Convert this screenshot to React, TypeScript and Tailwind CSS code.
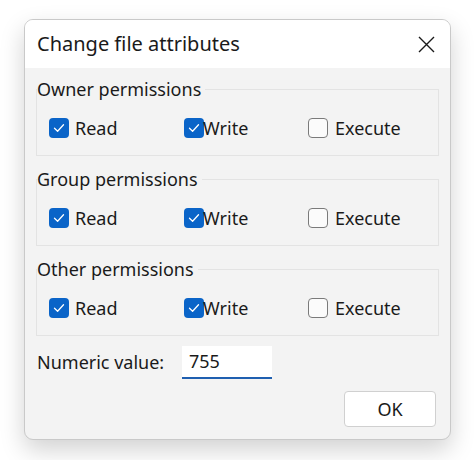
import React from "react";

function Check({ checked }: { checked: boolean }) {
  if (checked) {
    return (
      <span className="flex h-[20px] w-[20px] shrink-0 items-center justify-center rounded-[4px] bg-[#0a64c8]">
        <svg width="12" height="10" viewBox="0 0 12 10" fill="none">
          <path d="M1.5 5.2 L4.6 8.2 L10.5 1.8" stroke="white" strokeWidth="1.3" strokeLinecap="round" strokeLinejoin="round" />
        </svg>
      </span>
    );
  }
  return <span className="h-[20px] w-[20px] shrink-0 rounded-[4px] border border-[#7a7a7a] bg-[#fbfbfb]" />;
}

function Group({ title }: { title: string }) {
  return (
    <fieldset className="border border-[#e3e3e3] bg-[#f3f3f3] p-0">
      <legend className="h-[24px] pr-[4px] text-[18px] leading-[24px] text-[#1a1a1a]">{title}</legend>
      <div className="flex h-[54px] items-center pl-[12px] text-[18px] text-[#1a1a1a]">
        <div className="flex w-[135px] items-center gap-[6px]">
          <Check checked />
          <span>Read</span>
        </div>
        <div className="flex w-[124px] items-center">
          <Check checked />
          <span className="-ml-[1px]">Write</span>
        </div>
        <div className="flex items-center gap-[7px]">
          <Check checked={false} />
          <span>Execute</span>
        </div>
      </div>
    </fieldset>
  );
}

export default function App() {
  return (
    <div className="h-[460px] w-[474px] bg-white pl-[24px] pt-[19px]" style={{ fontFamily: '"Noto Sans", "Open Sans", sans-serif' }}>
      <div className="flex h-[421px] w-[427px] flex-col overflow-hidden rounded-[9px] border border-[#c9c9c9] bg-[#f3f3f3] shadow-[0_10px_24px_rgba(0,0,0,0.18)]">
        <div className="flex h-[48px] shrink-0 items-center justify-between bg-white pl-[12px] pr-[15px]">
          <span className="text-[20px] text-[#1a1a1a]">Change file attributes</span>
          <svg width="17" height="17" viewBox="0 0 17 17">
            <path d="M1 1 L16 16 M16 1 L1 16" stroke="#1a1a1a" strokeWidth="1.4" />
          </svg>
        </div>
        <div className="flex flex-col gap-[11px] px-[11px] pt-[9px]">
          <Group title="Owner permissions" />
          <Group title="Group permissions" />
          <Group title="Other permissions" />
        </div>
        <div className="mt-[10px] flex items-center pl-[12px]">
          <span className="w-[145px] text-[18px] text-[#1a1a1a]">Numeric value:</span>
          <div className="flex h-[33px] w-[90px] items-center border-b-2 border-[#1f5fb0] bg-white pl-[7px] text-[18px] text-[#1a1a1a]">755</div>
        </div>
        <div className="mt-[12px] flex justify-end pr-[14px]">
          <button className="h-[36px] w-[92px] rounded-[4px] border border-[#d0d0d0] bg-white text-[18px] text-[#1a1a1a]">OK</button>
        </div>
      </div>
    </div>
  );
}
